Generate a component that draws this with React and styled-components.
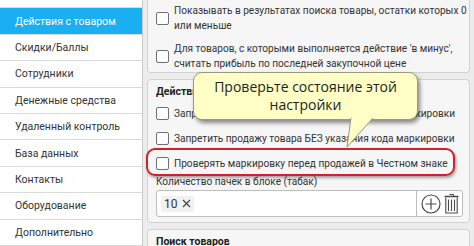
import React from "react";
import styled, { createGlobalStyle } from "styled-components";

const GlobalStyle = createGlobalStyle`
  html, body {
    margin: 0;
    padding: 0;
    width: 474px;
    height: 246px;
    overflow: hidden;
    background: #ececec;
    font-family: Roboto, "Liberation Sans", sans-serif;
    font-size: 10.5px;
    color: #2b2b2b;
  }
`;

const Page = styled.div`
  position: relative;
  display: flex;
  width: 474px;
  height: 246px;
  overflow: hidden;
`;

const Sidebar = styled.div`
  width: 142px;
  flex-shrink: 0;
  background: #ffffff;
  border-right: 1px solid #c9c9c9;
  display: flex;
  flex-direction: column;
  margin-top: -18px;
`;

const MenuItem = styled.div`
  height: 26.4px;
  box-sizing: border-box;
  flex-shrink: 0;
  display: flex;
  align-items: center;
  padding-left: 15px;
  border-bottom: 1px solid #dadada;
  background: ${(p) => (p.active ? "#19aff0" : "transparent")};
  color: ${(p) => (p.active ? "#ffffff" : "#333333")};
  white-space: nowrap;
`;

const Content = styled.div`
  flex: 1;
  min-width: 0;
  display: flex;
  flex-direction: column;
  gap: 6px;
  padding: 0 4px 0 4px;
  font-size: 10.1px;
`;

const Panel = styled.div`
  background: #f6f6f6;
  border: 1px solid #d2d2d2;
  border-radius: 4px;
  padding: ${(p) => p.pad || "6px 8px 6px 8px"};
  display: flex;
  flex-direction: column;
  flex-shrink: 0;
  overflow: hidden;
`;

const TopPanel = styled(Panel)`
  margin-top: -4px;
  border-top: none;
  border-top-left-radius: 0;
  border-top-right-radius: 0;
`;

const PanelTitle = styled.div`
  font-weight: 700;
  color: #222;
  line-height: 15px;
  font-size: 10.5px;
`;

const CheckRow = styled.label`
  display: flex;
  align-items: center;
  gap: 5px;
  line-height: 15px;
  color: #333;
  white-space: nowrap;
  margin-top: ${(p) => p.mt || "10px"};
`;

const Box = styled.span`
  width: 13px;
  height: 13px;
  flex-shrink: 0;
  box-sizing: border-box;
  background: #ffffff;
  border: 1px solid #707070;
  border-radius: 2px;
`;

const FieldLabel = styled.div`
  line-height: 15px;
  color: #333;
  margin-top: 3px;
`;

const Input = styled.div`
  height: 27px;
  box-sizing: border-box;
  margin-top: 1px;
  margin-right: -1px;
  background: #ffffff;
  border: 1px solid #bdbdbd;
  border-radius: 3px;
  display: flex;
  align-items: center;
`;

const Tags = styled.div`
  flex: 1;
  display: flex;
  align-items: center;
  padding-left: 4px;
`;

const Tag = styled.span`
  display: inline-flex;
  align-items: center;
  gap: 4px;
  padding: 1px 3px;
  background: #f1f1f1;
  border-radius: 2px;
  font-size: 12px;
  color: #333;
`;

const Actions = styled.div`
  height: 100%;
  display: flex;
  align-items: center;
  gap: 3px;
  padding: 0 3px 0 4px;
  border-left: 1px solid #bdbdbd;
`;

const Highlight = styled.div`
  position: absolute;
  left: 146px;
  top: 148px;
  width: 309px;
  height: 28px;
  box-sizing: border-box;
  border: 2px solid #d3202a;
  border-radius: 9px;
  box-shadow: 1px 2px 3px rgba(0, 0, 0, 0.35);
`;

const Callout = styled.div`
  position: absolute;
  left: 193px;
  top: 72px;
  width: 225px;
  height: 48px;
  box-sizing: border-box;
  background: #ffffc6;
  border: 1px solid #9a9a78;
  border-radius: 9px;
  box-shadow: 2px 3px 4px rgba(0, 0, 0, 0.45);
  display: flex;
  flex-direction: column;
  align-items: center;
  justify-content: center;
  font-family: "Open Sans", "Noto Sans", sans-serif;
  font-size: 14px;
  line-height: 18px;
  color: #1e1e1e;
  white-space: nowrap;
`;

const Tail = styled.svg`
  position: absolute;
  left: 343px;
  top: 118px;
  overflow: visible;
`;

const menu = [
  "Основное",
  "Действия с товаром",
  "Скидки/Баллы",
  "Сотрудники",
  "Денежные средства",
  "Удаленный контроль",
  "База данных",
  "Контакты",
  "Оборудование",
  "Дополнительно",
];

const PlusIcon = () => (
  <svg width="20" height="20" viewBox="0 0 20 20">
    <circle cx="10" cy="10" r="9" fill="none" stroke="#4a4a4a" strokeWidth="1.2" />
    <path d="M10 4.5v11M4.5 10h11" stroke="#4a4a4a" strokeWidth="1.2" />
  </svg>
);

const TrashIcon = () => (
  <svg width="15" height="21" viewBox="0 0 15 21">
    <path d="M5.5 1.5h4v2" fill="none" stroke="#4a4a4a" strokeWidth="1" />
    <path d="M0.5 3.5h14" stroke="#4a4a4a" strokeWidth="1.3" />
    <path d="M1.8 4.5v15.5h11.4V4.5" fill="none" stroke="#4a4a4a" strokeWidth="1.1" />
    <path d="M4.5 6.5v11.5M7.5 6.5v11.5M10.5 6.5v11.5" stroke="#4a4a4a" strokeWidth="1.1" />
  </svg>
);

export default function App() {
  return (
    <Page>
      <GlobalStyle />
      <Sidebar>
        {menu.map((m, i) => (
          <MenuItem key={m} active={i === 1}>
            {m}
          </MenuItem>
        ))}
      </Sidebar>
      <Content>
        <TopPanel pad="0 8px 1px 8px">
          <CheckRow mt="7px">
            <Box />
            <span>
              Показывать в результатах поиска товары, остатки которых 0
              <br />
              или меньше
            </span>
          </CheckRow>
          <CheckRow mt="8px">
            <Box />
            <span>
              Для товаров, с которыми выполняется действие 'в минус',
              <br />
              считать прибыль по последней закупочной цене
            </span>
          </CheckRow>
        </TopPanel>
        <Panel pad="4px 7px 5px 8px">
          <PanelTitle>Действия с товаром</PanelTitle>
          <CheckRow mt="7px">
            <Box />
            <span>Запретить продажу товара с неверным кодом маркировки</span>
          </CheckRow>
          <CheckRow>
            <Box />
            <span>Запретить продажу товара БЕЗ указания кода маркировки</span>
          </CheckRow>
          <CheckRow>
            <Box />
            <span>Проверять маркировку перед продажей в Честном знаке</span>
          </CheckRow>
          <FieldLabel>Количество пачек в блоке (табак)</FieldLabel>
          <Input>
            <Tags>
              <Tag>
                10
                <svg width="9" height="9" viewBox="0 0 9 9">
                  <path d="M1 1l7 7M8 1l-7 7" stroke="#444" strokeWidth="1.2" />
                </svg>
              </Tag>
            </Tags>
            <Actions>
              <PlusIcon />
              <TrashIcon />
            </Actions>
          </Input>
        </Panel>
        <Panel pad="4px 8px 6px 8px">
          <PanelTitle>Поиск товаров</PanelTitle>
        </Panel>
      </Content>
      <Highlight />
      <Callout>
        <span>Проверьте состояние этой</span>
        <span>настройки</span>
      </Callout>
      <Tail width="32" height="32">
        <path d="M8 0 L4 29 L30 0" fill="#ffffc6" stroke="#9a9a78" strokeWidth="1" />
        <path d="M8.5 -1 L29 -1" stroke="#ffffc6" strokeWidth="2.5" />
      </Tail>
    </Page>
  );
}
